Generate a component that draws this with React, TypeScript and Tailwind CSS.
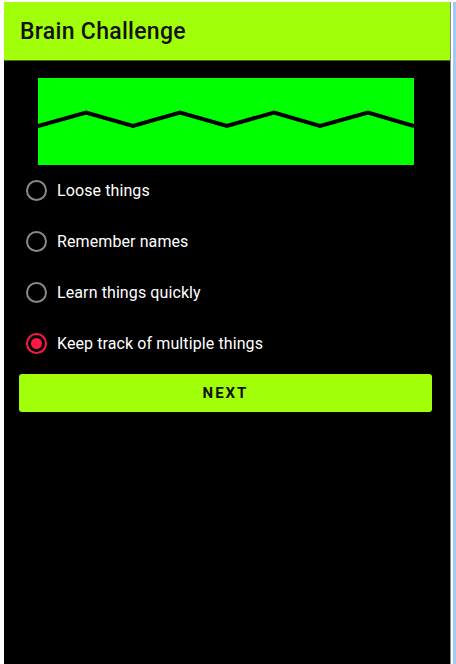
import { useState } from "react";

const options = ["Loose things", "Remember names", "Learn things quickly", "Keep track of multiple things"];

function Zigzag() {
  return (
    <svg viewBox="0 0 376 87" className="block h-[87px] w-[376px]">
      <rect width="376" height="87" fill="#00ff00" />
      <polyline
        points="0,48 48,34.5 95,48 142,34.5 189,48 236,34.5 282,48 330,34.5 376,48"
        fill="none"
        stroke="#000"
        strokeWidth="4"
        strokeLinejoin="miter"
      />
    </svg>
  );
}

function Radio({ checked }: { checked: boolean }) {
  return (
    <span
      className={
        checked
          ? "flex h-[21px] w-[21px] items-center justify-center rounded-full border-2 border-[#ff1744]"
          : "flex h-[21px] w-[21px] items-center justify-center rounded-full border-2 border-[#8a8a8a]"
      }
    >
      {checked && <span className="h-[11px] w-[11px] rounded-full bg-[#ff1744]" />}
    </span>
  );
}

export default function App() {
  const [selected, setSelected] = useState(3);

  return (
    <div className="flex h-[664px] w-[456px] bg-white pt-[2px] pl-[4px]" style={{ fontFamily: "Roboto, 'Noto Sans', sans-serif" }}>
      <div className="flex w-[447px] flex-col border-r border-[#8a8a8a] bg-black">
        <header className="flex h-[59px] items-center border-b border-[#4a6a00] bg-[#a2ff0a] pt-[3px] pl-[16px]">
          <h1 className="text-[23px] font-medium tracking-[0.3px] text-[#111]">Brain Challenge</h1>
        </header>

        <div className="flex flex-col px-[15px] pr-[18px]">
          <div className="mt-[17px] ml-[19px]">
            <Zigzag />
          </div>

          <div className="flex flex-col">
            {options.map((opt, i) => (
              <button
                key={opt}
                onClick={() => setSelected(i)}
                className="flex h-[51px] items-center gap-[10px] pl-[7px] text-left"
              >
                <Radio checked={selected === i} />
                <span className="text-[16px] tracking-[0.1px] text-white">{opt}</span>
              </button>
            ))}
          </div>

          <button className="mt-[5px] h-[38px] w-full rounded-[3px] bg-[#a2ff0a] pt-[1px] text-[15px] font-bold tracking-[2px] text-[#111]">
            NEXT
          </button>
        </div>
      </div>
      <div className="w-[2px] bg-white" />
      <div className="w-[3px] bg-[#9fcdf5]" />
    </div>
  );
}
